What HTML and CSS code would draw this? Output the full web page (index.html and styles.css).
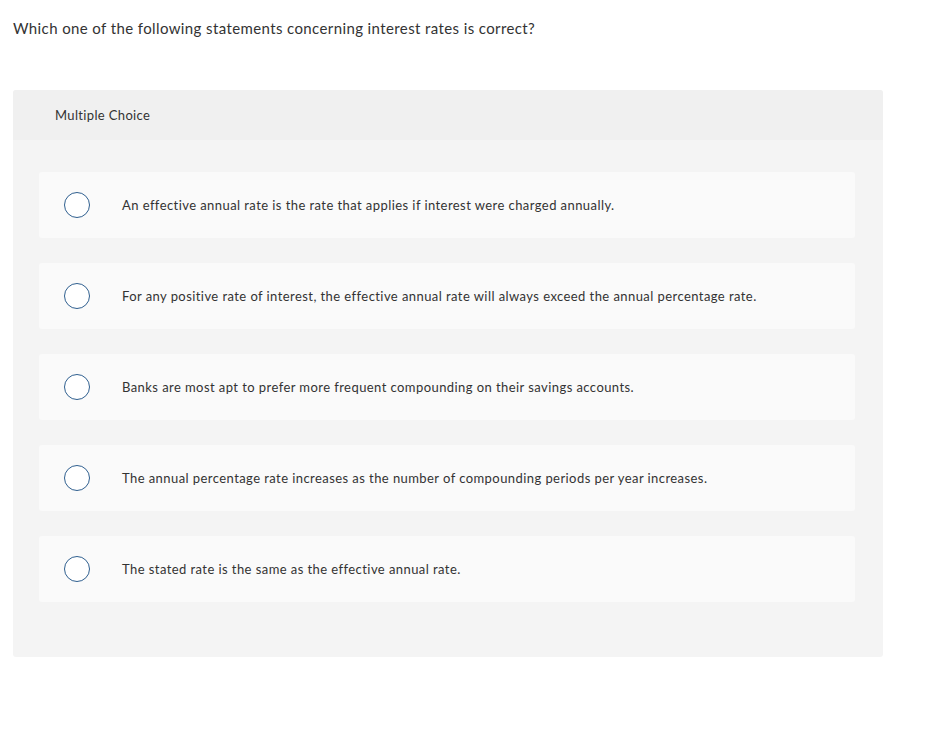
FILE: index.html
```html
<!DOCTYPE html>
<html>
<head>
<meta charset="utf-8">
<link rel="stylesheet" href="styles.css">
</head>
<body>
<div class="page">
  <p class="question">Which one of the following statements concerning interest rates is correct?</p>
  <div class="panel">
    <div class="panel-head">Multiple Choice</div>
    <div class="panel-body">
      <div class="option"><span class="radio"></span><span class="label">An effective annual rate is the rate that applies if interest were charged annually.</span></div>
      <div class="option"><span class="radio"></span><span class="label">For any positive rate of interest, the effective annual rate will always exceed the annual percentage rate.</span></div>
      <div class="option"><span class="radio"></span><span class="label">Banks are most apt to prefer more frequent compounding on their savings accounts.</span></div>
      <div class="option"><span class="radio"></span><span class="label">The annual percentage rate increases as the number of compounding periods per year increases.</span></div>
      <div class="option"><span class="radio"></span><span class="label">The stated rate is the same as the effective annual rate.</span></div>
    </div>
  </div>
</div>
</body>
</html>
```
FILE: styles.css
```css
html, body {
  margin: 0;
  padding: 0;
  background: #ffffff;
}
body {
  font-family: Lato, "Open Sans", sans-serif;
  color: #333333;
}
.page {
  padding: 0 44px 0 13px;
}
.question {
  margin: 0;
  padding-top: 18px;
  font-size: 15px;
  line-height: 20px;
  letter-spacing: 0.39px;
  height: 72px;
}
.panel {
  width: 870px;
  border-radius: 3px;
  background: #f4f4f4;
  overflow: hidden;
}
.panel-head {
  height: 50px;
  background: #f0f0f0;
  display: flex;
  align-items: center;
  padding-left: 42px;
  font-size: 13px;
  letter-spacing: 0.35px;
}
.panel-body {
  padding: 32px 28px 55px 26px;
  display: flex;
  flex-direction: column;
  gap: 25px;
}
.option {
  height: 66px;
  background: #fafafa;
  border-radius: 3px;
  display: flex;
  align-items: center;
  padding-left: 25px;
}
.radio {
  width: 24px;
  height: 24px;
  border: 1.5px solid #2f5f8f;
  border-radius: 50%;
  background: #ffffff;
  flex: none;
}
.label {
  margin-left: 32px;
  font-size: 13px;
  letter-spacing: 0.43px;
  color: #333333;
}
```
